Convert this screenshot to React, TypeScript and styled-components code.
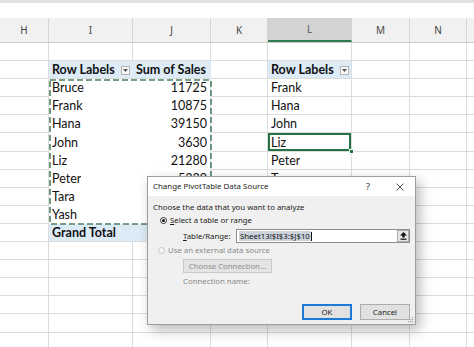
import React from "react";
import styled, { createGlobalStyle, css } from "styled-components";

const GlobalStyle = createGlobalStyle`
  html, body {
    margin: 0;
    padding: 0;
    background: #fff;
  }
  body {
    width: 474px;
    height: 347px;
    overflow: hidden;
    font-family: "Lato", "Liberation Sans", sans-serif;
  }
`;

const columns = [
  { key: "H", width: 49 },
  { key: "I", width: 84 },
  { key: "J", width: 78 },
  { key: "K", width: 57 },
  { key: "L", width: 84 },
  { key: "M", width: 58 },
  { key: "N", width: 57 },
  { key: "O", width: 57, hidden: true },
];

type CellData = {
  text?: string;
  kind?: "head" | "total" | "body";
  bold?: boolean;
  right?: boolean;
  filter?: boolean;
  selected?: boolean;
};

type RowData = Partial<Record<string, CellData>>;

const body = (text: string, right = false): CellData => ({ text, kind: "body", right });

const rows: RowData[] = [
  {},
  {
    I: { text: "Row Labels", kind: "head", bold: true, filter: true },
    J: { text: "Sum of Sales", kind: "head", bold: true },
    L: { text: "Row Labels", kind: "head", bold: true, filter: true },
  },
  { I: body("Bruce"), J: body("11725", true), L: { text: "Frank" } },
  { I: body("Frank"), J: body("10875", true), L: { text: "Hana" } },
  { I: body("Hana"), J: body("39150", true), L: { text: "John" } },
  { I: body("John"), J: body("3630", true), L: { text: "Liz", selected: true } },
  { I: body("Liz"), J: body("21280", true), L: { text: "Peter" } },
  { I: body("Peter"), J: body("5330", true), L: { text: "Tara" } },
  { I: body("Tara"), J: body("24760", true), L: { text: "Yash" } },
  { I: body("Yash"), J: body("10110", true), L: { text: "Grand Total", kind: "total", bold: true } },
  {
    I: { text: "Grand Total", kind: "total", bold: true },
    J: { text: "126860", kind: "total", bold: true, right: true },
  },
  {}, {}, {}, {}, {}, {},
];

const Page = styled.div`
  position: relative;
  width: 474px;
  height: 347px;
  overflow: hidden;
  background: #fff;
`;

const TopStrip = styled.div`
  height: 3px;
  background: #e2e2e2;
`;

const FormulaGap = styled.div`
  height: 15px;
  background: #fff;
`;

const HeaderRow = styled.div`
  display: flex;
  height: 25px;
  background: #f1f1f1;
  border-bottom: 1px solid #cdcdcd;
  box-sizing: border-box;
`;

const ColHead = styled.div<{ $w: number; $active?: boolean }>`
  flex: none;
  width: ${(p) => p.$w}px;
  box-sizing: border-box;
  display: flex;
  align-items: center;
  justify-content: center;
  border-right: 1px solid #d6d6d6;
  font: 10px "Noto Sans", "Liberation Sans", sans-serif;
  color: #444;
  ${(p) =>
    p.$active &&
    css`
      background: #d3d3d3;
      border-bottom: 2px solid #2f7a4f;
      color: #555;
    `}
`;

const Row = styled.div`
  display: flex;
  height: 18.1px;
`;

const Cell = styled.div<{
  $w: number;
  $kind?: string;
  $bold?: boolean;
  $right?: boolean;
  $selected?: boolean;
  $col: string;
}>`
  position: relative;
  flex: none;
  width: ${(p) => p.$w}px;
  height: 100%;
  box-sizing: border-box;
  display: flex;
  align-items: flex-end;
  justify-content: ${(p) => (p.$right ? "flex-end" : "flex-start")};
  padding: 0 3px 1px 3px;
  border-right: 1px solid #dcdcdc;
  border-bottom: 1px solid #dcdcdc;
  font-size: 12.5px;
  line-height: 15px;
  font-weight: ${(p) => (p.$bold ? 700 : 400)};
  color: #111;
  white-space: nowrap;
  ${(p) =>
    (p.$kind === "head" || p.$kind === "total") &&
    css`
      background: #ddebf7;
    `}
  ${(p) =>
    (p.$kind === "head" || p.$kind === "body") &&
    p.$col === "I" &&
    css`
      border-right-color: transparent;
    `}
  ${(p) =>
    p.$kind === "head" &&
    p.$col === "J" &&
    css`
      border-right-color: #ddebf7;
    `}
  ${(p) =>
    p.$kind === "body" &&
    css`
      border-bottom-color: transparent;
    `}
  ${(p) =>
    p.$kind === "total" &&
    p.$col === "I" &&
    css`
      border-right-color: transparent;
    `}
  ${(p) =>
    p.$selected &&
    css`
      box-shadow: inset 0 0 0 2px #217346;
      &::after {
        content: "";
        position: absolute;
        right: -3px;
        bottom: -3px;
        width: 5px;
        height: 5px;
        background: #217346;
        border: 1px solid #fff;
        box-sizing: border-box;
        z-index: 2;
      }
    `}
`;

const CellText = styled.span`
  overflow: hidden;
`;

const FilterButton = styled.span`
  flex: none;
  width: 9px;
  height: 9px;
  margin: 0 -1px 2px auto;
  box-sizing: border-box;
  border: 1px solid #b4b4b4;
  background: #f7f7f7;
  display: flex;
  align-items: center;
  justify-content: center;
`;

const Ants = styled.svg`
  position: absolute;
  left: 49px;
  top: 79px;
  width: 163px;
  height: 146px;
  pointer-events: none;
`;

/* dialog */

const Dialog = styled.div`
  position: absolute;
  left: 147px;
  top: 176px;
  width: 269px;
  height: 149px;
  box-sizing: border-box;
  border: 1px solid #9d9d9d;
  background: #f0f0f0;
  box-shadow: 4px 5px 12px rgba(0, 0, 0, 0.28);
  display: flex;
  flex-direction: column;
  font-family: "Noto Sans", "Open Sans", sans-serif;
  font-size: 7.8px;
  line-height: 9px;
  color: #1b1b1b;
  z-index: 5;
`;

const TitleBar = styled.div`
  flex: none;
  height: 19px;
  background: #fff;
  display: flex;
  align-items: center;
  padding-left: 5px;
`;

const Title = styled.div`
  flex: 1;
  font-size: 7.9px;
  color: #222;
`;

const TitleButton = styled.div<{ $mr?: number }>`
  width: 30px;
  height: 19px;
  margin-right: ${(p) => p.$mr ?? 0}px;
  display: flex;
  align-items: center;
  justify-content: center;
  font-size: 9px;
  color: #333;
`;

const Body = styled.div`
  flex: 1;
  display: flex;
  flex-direction: column;
  padding: 6px 5px 4px 5px;
`;

const Line = styled.div<{ $ml?: number; $mt?: number; $muted?: boolean }>`
  display: flex;
  align-items: center;
  height: 11px;
  margin-left: ${(p) => p.$ml ?? 0}px;
  margin-top: ${(p) => p.$mt ?? 0}px;
  color: ${(p) => (p.$muted ? "#8a8a8a" : "#1b1b1b")};
  white-space: nowrap;
`;

const Radio = styled.span<{ $on?: boolean; $disabled?: boolean }>`
  flex: none;
  width: 7px;
  height: 7px;
  border-radius: 50%;
  box-sizing: border-box;
  border: 1px solid ${(p) => (p.$disabled ? "#c4c4c4" : "#333")};
  background: ${(p) => (p.$disabled ? "#f7f7f7" : "#fff")};
  margin-right: 3px;
  display: flex;
  align-items: center;
  justify-content: center;
  &::after {
    content: "";
    display: ${(p) => (p.$on ? "block" : "none")};
    width: 3px;
    height: 3px;
    border-radius: 50%;
    background: #111;
  }
`;

/* access-key label: first letter underlined */
const Mnemonic = styled.span`
  display: inline-block;
  white-space: nowrap;
  &::first-letter {
    text-decoration: underline;
    text-underline-offset: 1px;
  }
`;

const FieldRow = styled.div`
  display: flex;
  align-items: center;
  height: 14px;
  margin-top: 3px;
  margin-left: 30px;
`;

const FieldLabel = styled.div`
  width: 53px;
  flex: none;
  white-space: nowrap;
`;

const RangeInput = styled.div`
  width: 174px;
  height: 14px;
  box-sizing: border-box;
  border: 1px solid #8c8c8c;
  background: #fff;
  display: flex;
  align-items: center;
  padding-left: 2px;
`;

const Highlight = styled.span`
  background: #ccd3dc;
  color: #111;
  line-height: 10px;
  padding: 0 1px;
`;

const Caret = styled.span`
  width: 1px;
  height: 9px;
  background: #111;
`;

const CollapseButton = styled.div`
  margin-left: auto;
  width: 12px;
  height: 12px;
  box-sizing: border-box;
  border: 1px solid #adadad;
  background: #e6e6e6;
  display: flex;
  align-items: center;
  justify-content: center;
`;

const Button = styled.div<{ $w: number; $focus?: boolean; $disabled?: boolean; $ml?: number; $mt?: number }>`
  width: ${(p) => p.$w}px;
  height: ${(p) => (p.$disabled ? 14 : 16)}px;
  margin-left: ${(p) => p.$ml ?? 0}px;
  margin-top: ${(p) => p.$mt ?? 0}px;
  box-sizing: border-box;
  border: 1px solid ${(p) => (p.$focus ? "#1c7bd4" : p.$disabled ? "#c9c9c9" : "#adadad")};
  background: ${(p) => (p.$disabled ? "#e4e4e4" : "#e1e1e1")};
  color: ${(p) => (p.$disabled ? "#8d8d8d" : "#1b1b1b")};
  display: flex;
  align-items: center;
  justify-content: center;
  white-space: nowrap;
  ${(p) =>
    p.$focus &&
    css`
      box-shadow: inset 0 0 0 1px #1c7bd4;
    `}
`;

const ButtonRow = styled.div`
  margin-top: auto;
  display: flex;
  justify-content: flex-end;
  gap: 8px;
`;

const Grip = styled.svg`
  position: absolute;
  right: 1px;
  bottom: 1px;
  width: 6px;
  height: 6px;
`;

function Sheet() {
  return (
    <>
      <TopStrip />
      <FormulaGap />
      <HeaderRow>
        {columns.map((c) => (
          <ColHead key={c.key} $w={c.width} $active={c.key === "L"}>
            {c.hidden ? null : c.key}
          </ColHead>
        ))}
      </HeaderRow>
      {rows.map((r, i) => (
        <Row key={i}>
          {columns.map((c) => {
            const d = r[c.key];
            return (
              <Cell
                key={c.key}
                $w={c.width}
                $col={c.key}
                $kind={d?.kind}
                $bold={d?.bold}
                $right={d?.right}
                $selected={d?.selected}
              >
                {d?.text && <CellText>{d.text}</CellText>}
                {d?.filter && (
                  <FilterButton>
                    <svg width="5" height="3" viewBox="0 0 5 3">
                      <path d="M0 0 L5 0 L2.5 3 Z" fill="#555" />
                    </svg>
                  </FilterButton>
                )}
              </Cell>
            );
          })}
        </Row>
      ))}
      <Ants viewBox="0 0 163 146">
        <rect x="1" y="1" width="161" height="144" fill="none" stroke="#4f8062" strokeWidth="1.6" strokeDasharray="6 3" />
      </Ants>
    </>
  );
}

function PivotSourceDialog() {
  return (
    <Dialog>
      <TitleBar>
        <Title>Change PivotTable Data Source</Title>
        <TitleButton $mr={2}>?</TitleButton>
        <TitleButton>
          <svg width="8" height="8" viewBox="0 0 8 8">
            <path d="M0.5 0.5 L7.5 7.5 M7.5 0.5 L0.5 7.5" stroke="#333" strokeWidth="0.9" />
          </svg>
        </TitleButton>
      </TitleBar>
      <Body>
        <Line>Choose the data that you want to analyze</Line>
        <Line $ml={7} $mt={2}>
          <Radio $on />
          <Mnemonic>Select a table or range</Mnemonic>
        </Line>
        <FieldRow>
          <FieldLabel>
            <Mnemonic>Table/Range:</Mnemonic>
          </FieldLabel>
          <RangeInput>
            <Highlight>Sheet13!$I$3:$J$10</Highlight>
            <Caret />
            <CollapseButton>
              <svg width="7" height="8" viewBox="0 0 7 8">
                <path d="M3.5 0 L7 3.5 L4.7 3.5 L4.7 5.6 L2.3 5.6 L2.3 3.5 L0 3.5 Z" fill="#111" />
                <rect x="0.5" y="6.6" width="6" height="1.2" fill="#111" />
              </svg>
            </CollapseButton>
          </RangeInput>
        </FieldRow>
        <Line $ml={5} $mt={2} $muted>
          <Radio $disabled />
          <span>Use an external data source</span>
        </Line>
        <Button $w={89} $disabled $ml={30} $mt={3}>
          Choose Connection...
        </Button>
        <Line $ml={30} $mt={3} $muted>
          Connection name:
        </Line>
        <ButtonRow>
          <Button $w={50} $focus>
            OK
          </Button>
          <Button $w={50}>Cancel</Button>
        </ButtonRow>
      </Body>
      <Grip viewBox="0 0 6 6">
        <rect x="4" y="0" width="1.2" height="1.2" fill="#a0a0a0" />
        <rect x="2" y="2" width="1.2" height="1.2" fill="#a0a0a0" />
        <rect x="4" y="2" width="1.2" height="1.2" fill="#a0a0a0" />
        <rect x="0" y="4" width="1.2" height="1.2" fill="#a0a0a0" />
        <rect x="2" y="4" width="1.2" height="1.2" fill="#a0a0a0" />
        <rect x="4" y="4" width="1.2" height="1.2" fill="#a0a0a0" />
      </Grip>
    </Dialog>
  );
}

export default function App() {
  return (
    <Page>
      <GlobalStyle />
      <Sheet />
      <PivotSourceDialog />
    </Page>
  );
}
